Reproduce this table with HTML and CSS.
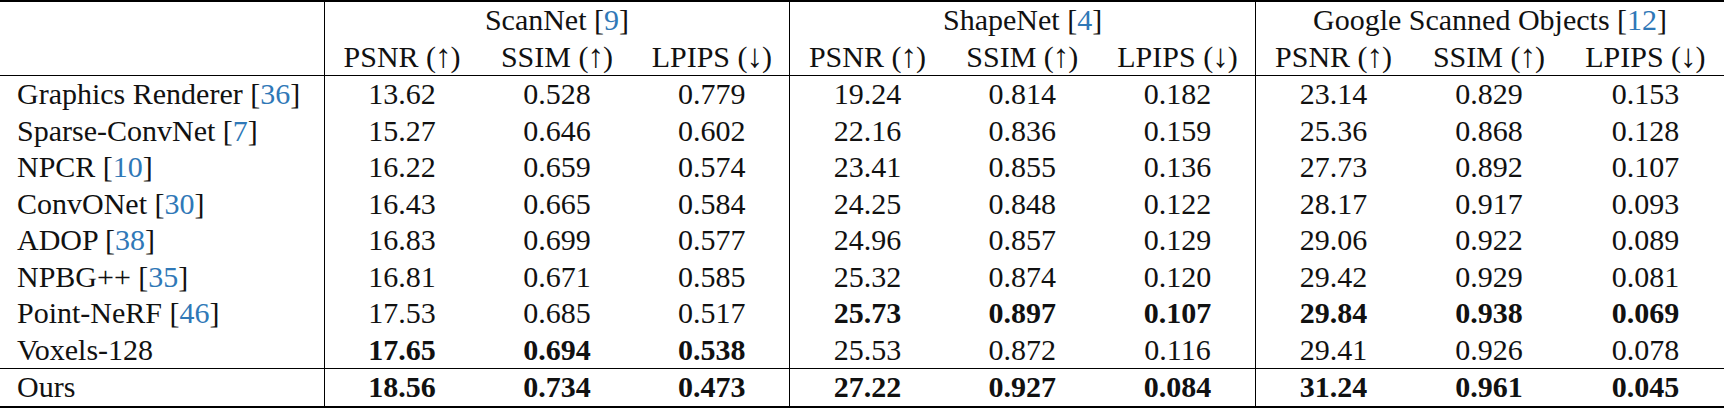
FILE: index.html
```html
<!DOCTYPE html>
<html lang="en">
<head>
<meta charset="utf-8">
<title>Results table</title>
<link rel="stylesheet" href="styles.css">
</head>
<body>
<table class="results">
  <colgroup>
    <col class="c-method">
    <col class="c-a"><col class="c-a"><col class="c-a">
    <col class="c-a"><col class="c-a"><col class="c-b">
    <col class="c-b"><col class="c-b"><col class="c-c">
  </colgroup>
  <thead>
    <tr class="groups">
      <th class="method"></th>
      <th colspan="3" class="grp">ScanNet [<span class="cite">9</span>]</th>
      <th colspan="3" class="grp">ShapeNet [<span class="cite">4</span>]</th>
      <th colspan="3" class="grp">Google Scanned Objects [<span class="cite">12</span>]</th>
    </tr>
    <tr class="metrics">
      <th class="method"></th>
      <th class="first">PSNR (<span class="arr">↑</span>)</th><th>SSIM (<span class="arr">↑</span>)</th><th>LPIPS (<span class="arr">↓</span>)</th>
      <th class="first">PSNR (<span class="arr">↑</span>)</th><th>SSIM (<span class="arr">↑</span>)</th><th>LPIPS (<span class="arr">↓</span>)</th>
      <th class="first">PSNR (<span class="arr">↑</span>)</th><th>SSIM (<span class="arr">↑</span>)</th><th>LPIPS (<span class="arr">↓</span>)</th>
    </tr>
  </thead>
  <tbody>
    <tr>
      <td class="method">Graphics Renderer [<span class="cite">36</span>]</td>
      <td class="first">13.62</td><td>0.528</td><td>0.779</td>
      <td class="first">19.24</td><td>0.814</td><td>0.182</td>
      <td class="first">23.14</td><td>0.829</td><td>0.153</td>
    </tr>
    <tr>
      <td class="method">Sparse-ConvNet [<span class="cite">7</span>]</td>
      <td class="first">15.27</td><td>0.646</td><td>0.602</td>
      <td class="first">22.16</td><td>0.836</td><td>0.159</td>
      <td class="first">25.36</td><td>0.868</td><td>0.128</td>
    </tr>
    <tr>
      <td class="method">NPCR [<span class="cite">10</span>]</td>
      <td class="first">16.22</td><td>0.659</td><td>0.574</td>
      <td class="first">23.41</td><td>0.855</td><td>0.136</td>
      <td class="first">27.73</td><td>0.892</td><td>0.107</td>
    </tr>
    <tr>
      <td class="method">ConvONet [<span class="cite">30</span>]</td>
      <td class="first">16.43</td><td>0.665</td><td>0.584</td>
      <td class="first">24.25</td><td>0.848</td><td>0.122</td>
      <td class="first">28.17</td><td>0.917</td><td>0.093</td>
    </tr>
    <tr>
      <td class="method">ADOP [<span class="cite">38</span>]</td>
      <td class="first">16.83</td><td>0.699</td><td>0.577</td>
      <td class="first">24.96</td><td>0.857</td><td>0.129</td>
      <td class="first">29.06</td><td>0.922</td><td>0.089</td>
    </tr>
    <tr>
      <td class="method">NPBG++ [<span class="cite">35</span>]</td>
      <td class="first">16.81</td><td>0.671</td><td>0.585</td>
      <td class="first">25.32</td><td>0.874</td><td>0.120</td>
      <td class="first">29.42</td><td>0.929</td><td>0.081</td>
    </tr>
    <tr>
      <td class="method">Point-NeRF [<span class="cite">46</span>]</td>
      <td class="first">17.53</td><td>0.685</td><td>0.517</td>
      <td class="first best">25.73</td><td class="best">0.897</td><td class="best">0.107</td>
      <td class="first best">29.84</td><td class="best">0.938</td><td class="best">0.069</td>
    </tr>
    <tr>
      <td class="method">Voxels-128</td>
      <td class="first best">17.65</td><td class="best">0.694</td><td class="best">0.538</td>
      <td class="first">25.53</td><td>0.872</td><td>0.116</td>
      <td class="first">29.41</td><td>0.926</td><td>0.078</td>
    </tr>
  </tbody>
  <tbody class="ours">
    <tr>
      <td class="method">Ours</td>
      <td class="first best">18.56</td><td class="best">0.734</td><td class="best">0.473</td>
      <td class="first best">27.22</td><td class="best">0.927</td><td class="best">0.084</td>
      <td class="first best">31.24</td><td class="best">0.961</td><td class="best">0.045</td>
    </tr>
  </tbody>
</table>
</body>
</html>
```

FILE: styles.css
```css
html, body {
  margin: 0;
  padding: 0;
  background: #fff;
}

.results {
  border-collapse: collapse;
  table-layout: fixed;
  width: 1724px;
  font-family: "Liberation Serif", "DejaVu Serif", serif;
  font-size: 30px;
  color: #111;
  border-top: 2px solid #000;
  border-bottom: 2px solid #000;
}

.c-method { width: 324px; }
.c-a { width: 155px; }
.c-b { width: 155.5px; }
.c-c { width: 157px; }

.results th,
.results td {
  height: 36.5px;
  padding: 0;
  text-align: center;
  font-weight: normal;
  white-space: nowrap;
  line-height: 1;
}

.results .method {
  text-align: left;
  padding-left: 17px;
}

.results .first,
.results .grp {
  border-left: 1.5px solid #000;
}

.results thead tr.metrics th {
  border-bottom: 1px solid #000;
}

.results tbody.ours td {
  border-top: 1px solid #000;
}

.results .best {
  font-weight: bold;
}

.arr {
  font-family: "Liberation Serif", serif;
  font-size: 1.1em;
  line-height: 0;
  margin: 0 -1px;
}

.cite {
  color: #2f78b7;
}
```
